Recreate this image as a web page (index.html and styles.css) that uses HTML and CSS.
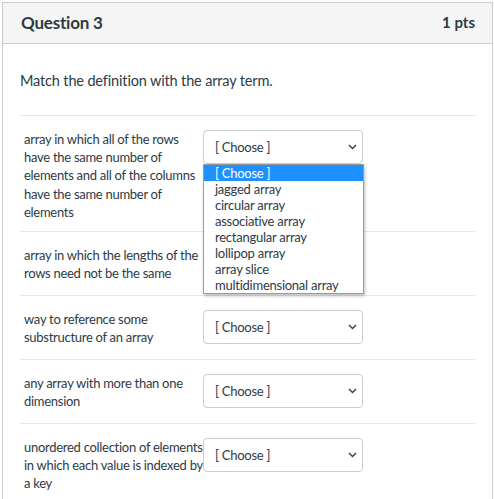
FILE: index.html
```html
<!DOCTYPE html>
<html>
<head>
<meta charset="utf-8">
<link rel="stylesheet" href="styles.css">
</head>
<body>
<div class="card">
  <div class="card-header">
    <h2 class="title">Question 3</h2>
    <div class="points">1 pts</div>
  </div>
  <div class="card-body">
    <p class="prompt">Match the definition with the array term.</p>
    <div class="rows">
      <div class="row">
        <div class="def">array in which all of the rows have the same number of elements and all of the columns have the same number of elements</div>
        <div class="select-wrap">
          <div class="select"><span>[ Choose ]</span><svg class="chev" width="9" height="6" viewBox="0 0 9 6"><path d="M1 1 L4.5 4.5 L8 1" fill="none" stroke="#3a3a3a" stroke-width="1.4"/></svg></div>
          <ul class="options">
            <li class="active">[ Choose ]</li>
            <li>jagged array</li>
            <li>circular array</li>
            <li>associative array</li>
            <li>rectangular array</li>
            <li>lollipop array</li>
            <li>array slice</li>
            <li>multidimensional array</li>
          </ul>
        </div>
      </div>
      <div class="row">
        <div class="def">array in which the lengths of the rows need not be the same</div>
        <div class="select-wrap">
          <div class="select"><span>[ Choose ]</span><svg class="chev" width="9" height="6" viewBox="0 0 9 6"><path d="M1 1 L4.5 4.5 L8 1" fill="none" stroke="#3a3a3a" stroke-width="1.4"/></svg></div>
        </div>
      </div>
      <div class="row">
        <div class="def">way to reference some substructure of an array</div>
        <div class="select-wrap">
          <div class="select"><span>[ Choose ]</span><svg class="chev" width="9" height="6" viewBox="0 0 9 6"><path d="M1 1 L4.5 4.5 L8 1" fill="none" stroke="#3a3a3a" stroke-width="1.4"/></svg></div>
        </div>
      </div>
      <div class="row">
        <div class="def">any array with more than one dimension</div>
        <div class="select-wrap">
          <div class="select"><span>[ Choose ]</span><svg class="chev" width="9" height="6" viewBox="0 0 9 6"><path d="M1 1 L4.5 4.5 L8 1" fill="none" stroke="#3a3a3a" stroke-width="1.4"/></svg></div>
        </div>
      </div>
      <div class="row">
        <div class="def">unordered collection of elements in which each value is indexed by a key</div>
        <div class="select-wrap">
          <div class="select"><span>[ Choose ]</span><svg class="chev" width="9" height="6" viewBox="0 0 9 6"><path d="M1 1 L4.5 4.5 L8 1" fill="none" stroke="#3a3a3a" stroke-width="1.4"/></svg></div>
        </div>
      </div>
    </div>
  </div>
</div>
</body>
</html>
```
FILE: styles.css
```css
html, body {
  margin: 0;
  padding: 0;
  background: #ffffff;
}
body {
  font-family: Lato, "Liberation Sans", sans-serif;
  color: #2d3b45;
}
.card {
  box-sizing: border-box;
  margin: 2px 0 0 2px;
  width: 491px;
  height: 520px;
  border: 1px solid #c7cdd1;
  overflow: hidden;
}
.card-header {
  display: flex;
  justify-content: space-between;
  align-items: center;
  box-sizing: border-box;
  height: 41px;
  padding: 0 17px 2px 18px;
  background: #f5f5f5;
  border-bottom: 1px solid #c7cdd1;
}
.title {
  margin: 0;
  font-size: 17px;
  letter-spacing: -0.2px;
  font-weight: 700;
  color: #2d3b45;
}
.points {
  font-size: 15px;
  font-weight: 700;
  color: #2d3b45;
}
.card-body {
  padding: 0 17px 0 17px;
}
.prompt {
  margin: 0;
  padding: 27px 0 24px;
  font-size: 14.5px;
  letter-spacing: -0.15px;
  line-height: 20px;
}
.rows {
  border-top: 1px solid #e5e8ea;
}
.row {
  display: grid;
  grid-template-columns: 179px 160px;
  align-items: start;
  padding: 14px 0 10px 4px;
  border-bottom: 1px solid #e5e8ea;
}
.def {
  margin-right: -3px;
  font-size: 13px;
  letter-spacing: -0.28px;
  line-height: 18.2px;
}
.select-wrap {
  position: relative;
}
.select {
  box-sizing: border-box;
  height: 34px;
  margin-bottom: 5px;
  display: flex;
  align-items: center;
  justify-content: space-between;
  padding: 0 5px 0 11px;
  border: 1px solid #c7cdd1;
  border-radius: 4px;
  background: #fff;
  font-size: 13px;
  letter-spacing: -0.25px;
  color: #2d3b45;
}
.options {
  position: absolute;
  top: 34px;
  left: 0;
  width: 161px;
  box-sizing: border-box;
  margin: 0;
  padding: 0;
  list-style: none;
  background: #fff;
  border: 1px solid #9a9a9a;
  box-shadow: 1px 2px 3px rgba(0,0,0,0.25);
  z-index: 2;
}
.options li {
  height: 16px;
  line-height: 16px;
  padding-left: 11px;
  font-size: 13px;
  letter-spacing: -0.25px;
  color: #2d3b45;
}
.options li.active {
  background: #1e90ff;
  color: #fff;
}
```
